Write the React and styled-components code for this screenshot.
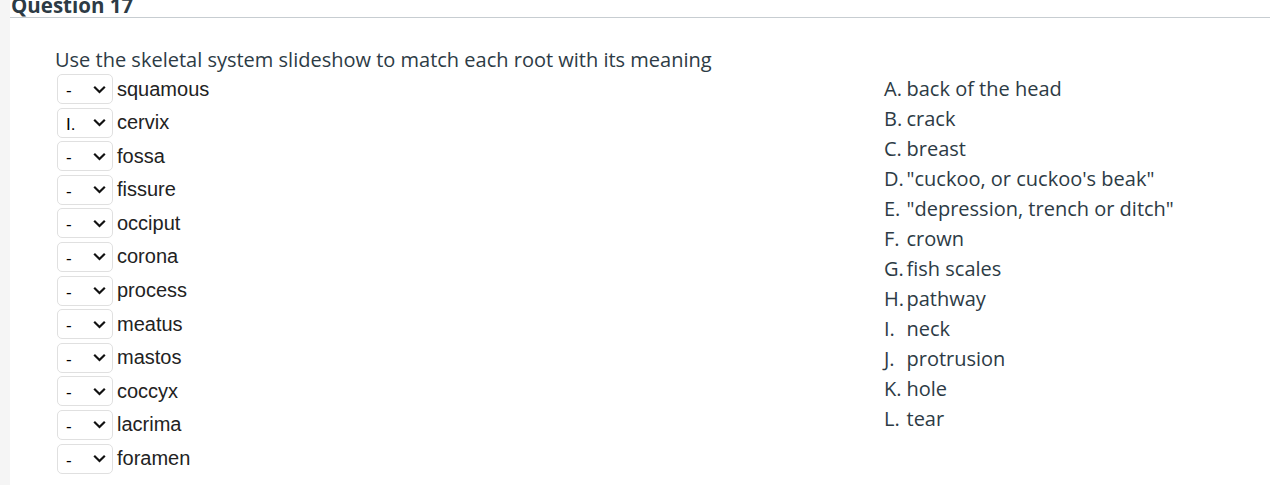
import React from "react";
import styled, { createGlobalStyle } from "styled-components";

const GlobalStyle = createGlobalStyle`
  html, body {
    margin: 0;
    padding: 0;
    background: #fff;
  }
  body {
    font-family: "Open Sans", "Liberation Sans", sans-serif;
    color: #2d3b45;
  }
`;

const Page = styled.div`
  display: flex;
  width: 1270px;
  height: 485px;
  overflow: hidden;
`;

const Gutter = styled.div`
  width: 10px;
  flex: none;
  background: #f5f5f5;
`;

const Question = styled.div`
  flex: 1;
  display: flex;
  flex-direction: column;
`;

/* header bar is scrolled so the title's top sits above the viewport */
const Header = styled.div`
  height: 17px;
  border-bottom: 1px solid #c7cdd1;
  display: flex;
  align-items: flex-end;
  overflow: hidden;
`;

const Title = styled.h2`
  margin: 0 0 0 1px;
  font-size: 20.5px;
  font-weight: 700;
  line-height: 20px;
  color: #2d3b45;
  transform: translateY(-2px);
`;

const Body = styled.div`
  padding: 29px 0 0 45px;
`;

const Prompt = styled.p`
  margin: 0;
  font-size: 20px;
  line-height: 25px;
`;

const Match = styled.div`
  display: flex;
`;

const Roots = styled.ul`
  list-style: none;
  margin: 0;
  padding: 2px 0 0 2px;
  width: 827px;
  display: flex;
  flex-direction: column;
  gap: 3.6px;
`;

const Row = styled.li`
  display: flex;
  align-items: center;
  gap: 4px;
`;

const Select = styled.div`
  width: 56px;
  height: 30px;
  box-sizing: border-box;
  border: 1px solid #e0e0e0;
  border-radius: 5px;
  display: flex;
  align-items: center;
  justify-content: space-between;
  padding: 0 6px 0 8px;
  font-family: "Liberation Sans", Arial, sans-serif;
  font-size: 17px;
  color: #000;
  background: #fff;
`;

const Value = styled.span`
  transform: translateY(2px);
`;

const Word = styled.span`
  font-family: "Liberation Sans", Arial, sans-serif;
  font-size: 20px;
  color: #222;
`;

const Answers = styled.ol`
  list-style: none;
  margin: 0;
  padding: 2px 0 0 0;
  display: flex;
  flex-direction: column;
`;

const Answer = styled.li`
  display: flex;
  font-size: 20px;
  line-height: 30px;
  white-space: nowrap;
`;

const Letter = styled.span`
  width: 22.5px;
  flex: none;
`;

const Chevron = () => (
  <svg width="13" height="9" viewBox="0 0 13 9">
    <path d="M1.2 1.8 L6.5 7 L11.8 1.8" fill="none" stroke="#111" strokeWidth="2.2" />
  </svg>
);

const roots = [
  ["-", "squamous"],
  ["I.", "cervix"],
  ["-", "fossa"],
  ["-", "fissure"],
  ["-", "occiput"],
  ["-", "corona"],
  ["-", "process"],
  ["-", "meatus"],
  ["-", "mastos"],
  ["-", "coccyx"],
  ["-", "lacrima"],
  ["-", "foramen"],
];

const meanings = [
  ["A.", "back of the head"],
  ["B.", "crack"],
  ["C.", "breast"],
  ["D.", "\"cuckoo, or cuckoo's beak\""],
  ["E.", "\"depression, trench or ditch\""],
  ["F.", "crown"],
  ["G.", "fish scales"],
  ["H.", "pathway"],
  ["I.", "neck"],
  ["J.", "protrusion"],
  ["K.", "hole"],
  ["L.", "tear"],
];

export default function App() {
  return (
    <>
      <GlobalStyle />
      <Page>
        <Gutter />
        <Question>
          <Header>
            <Title>Question 17</Title>
          </Header>
          <Body>
            <Prompt>Use the skeletal system slideshow to match each root with its meaning</Prompt>
            <Match>
              <Roots>
                {roots.map(([pick, word]) => (
                  <Row key={word}>
                    <Select>
                      <Value>{pick}</Value>
                      <Chevron />
                    </Select>
                    <Word>{word}</Word>
                  </Row>
                ))}
              </Roots>
              <Answers>
                {meanings.map(([letter, text]) => (
                  <Answer key={letter}>
                    <Letter>{letter}</Letter>
                    {text}
                  </Answer>
                ))}
              </Answers>
            </Match>
          </Body>
        </Question>
      </Page>
    </>
  );
}
